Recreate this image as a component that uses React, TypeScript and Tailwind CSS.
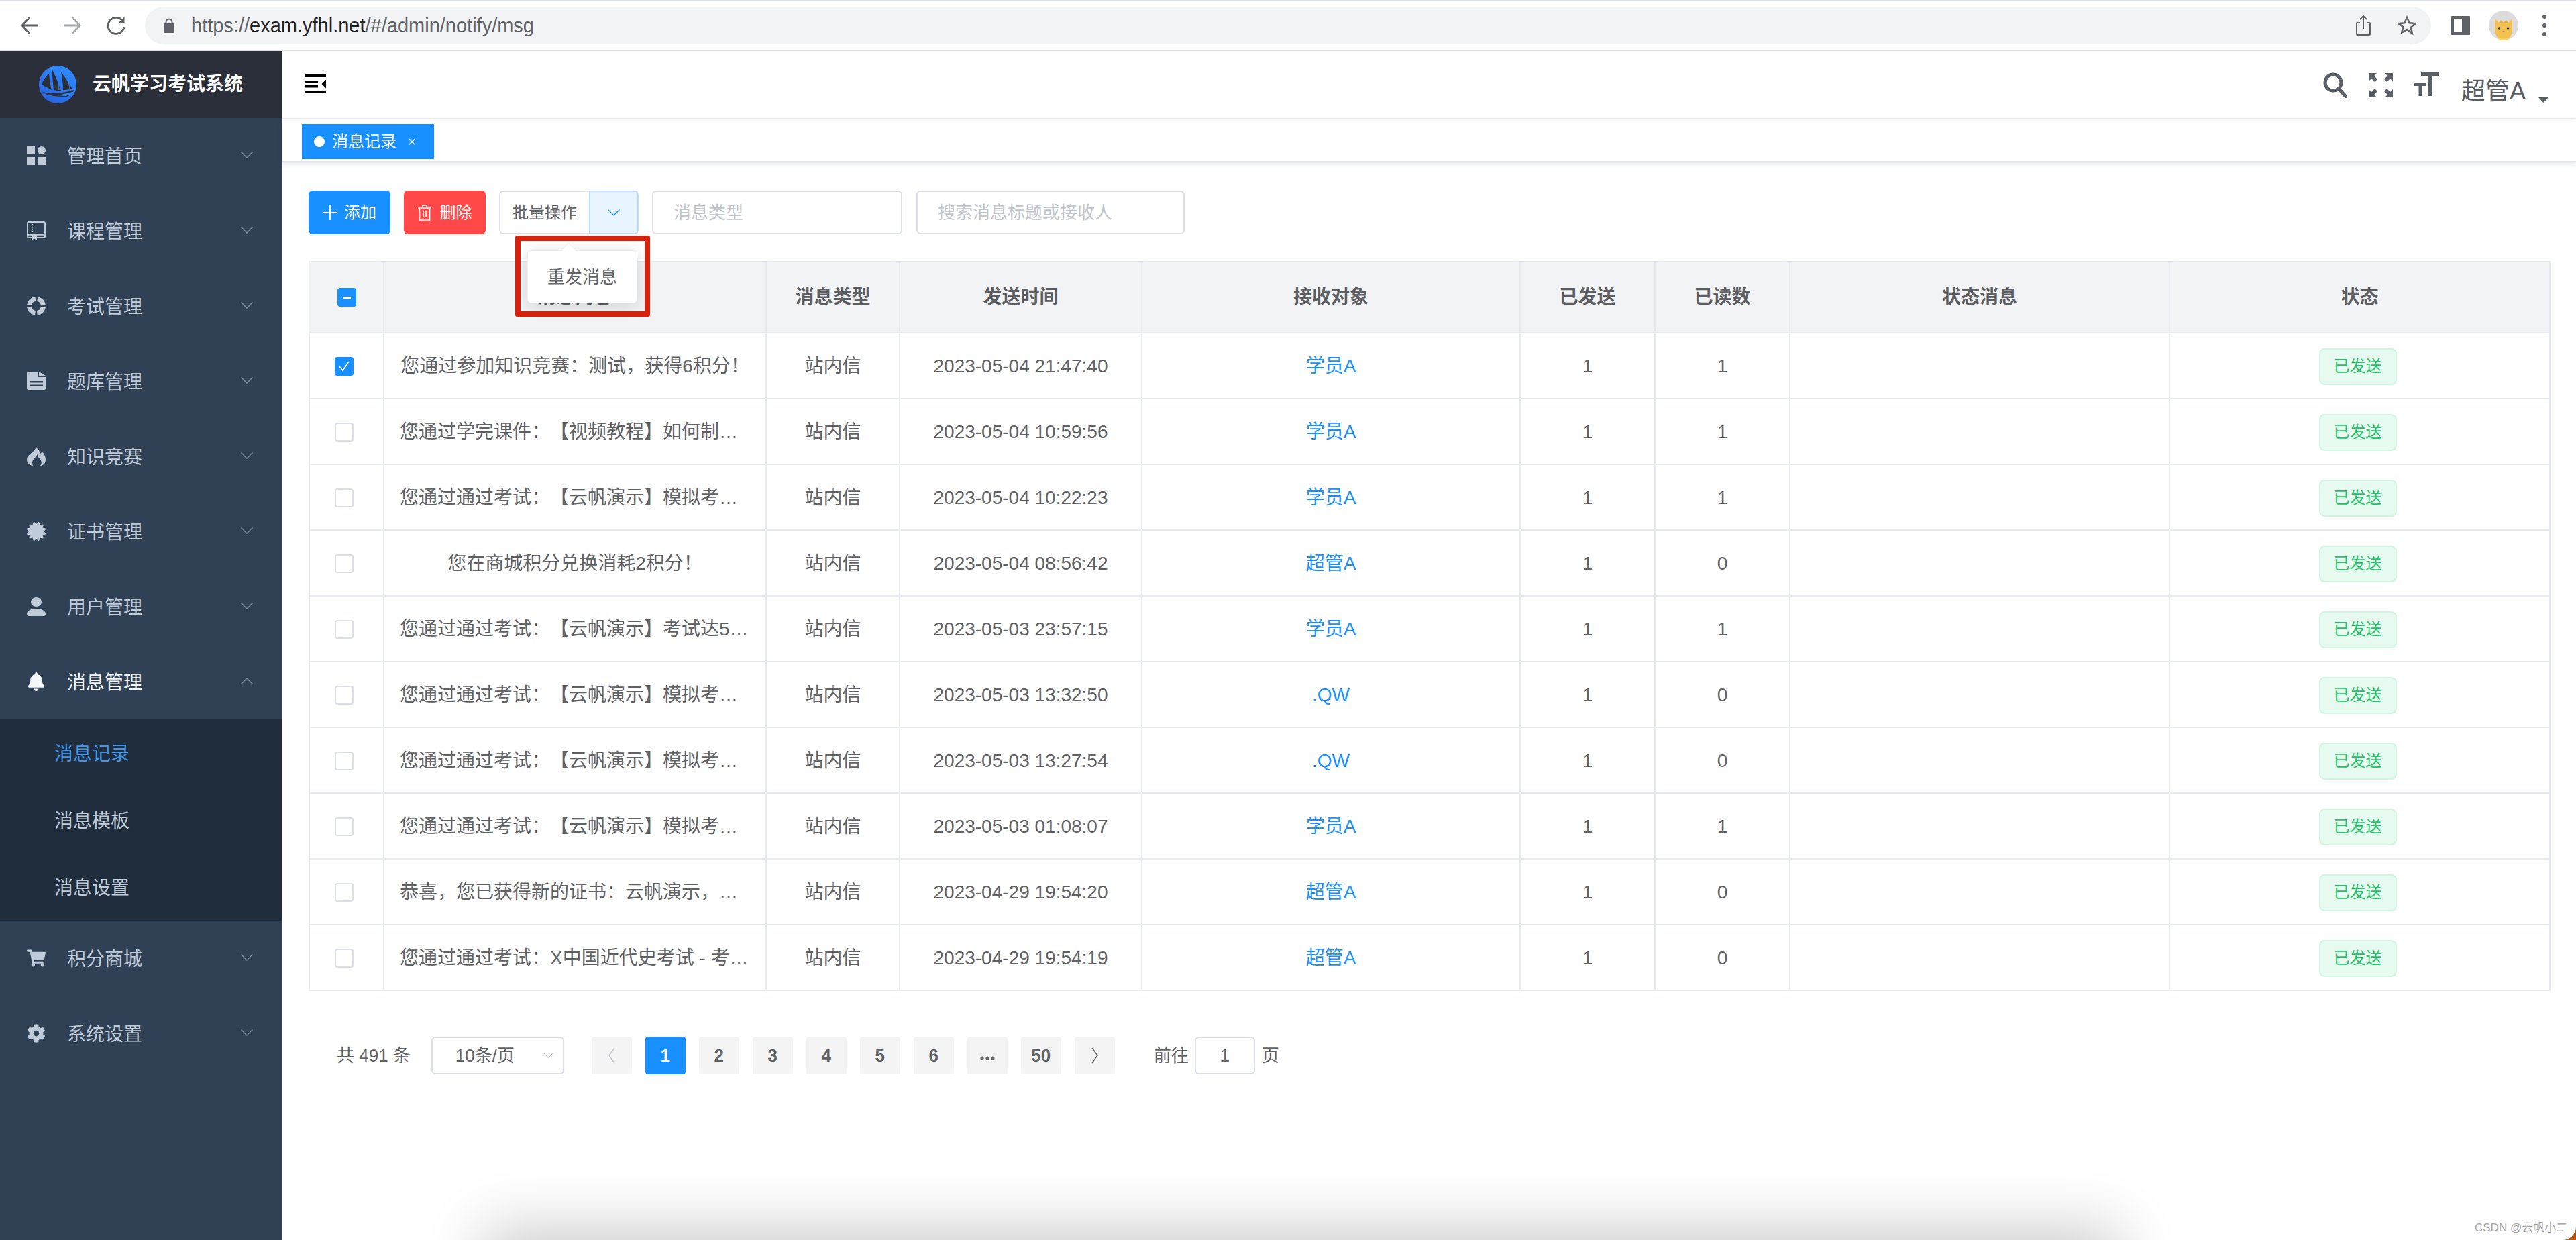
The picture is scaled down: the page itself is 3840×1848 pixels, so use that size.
import React from "react";
import { FaCertificate, FaBell, FaShoppingCart, FaCog } from "react-icons/fa";

const Chevron = ({ up = false, color = "#8a94a3", w = 18 }: { up?: boolean; color?: string; w?: number }) => (
  <svg width={w} height={w / 2 + 1} viewBox="0 0 18 10" fill="none" stroke={color} strokeWidth="1.3">
    <polyline points={up ? "0.5,9.5 9,1 17.5,9.5" : "0.5,0.5 9,9 17.5,0.5"} />
  </svg>
);

const C = "#bfcbd9";
const icons: Record<string, React.ReactNode> = {
  dash: (
    <svg width="28" height="28" viewBox="0 0 28 28" fill={C}>
      <rect x="0" y="0" width="12" height="12" />
      <circle cx="22" cy="6" r="6" />
      <rect x="0" y="16" width="12" height="12" />
      <rect x="16" y="16" width="12" height="12" />
    </svg>
  ),
  book: (
    <svg width="28" height="28" viewBox="0 0 28 28" fill="none" stroke={C} strokeWidth="2">
      <path d="M3 1H25a2 2 0 0 1 2 2V22a2 2 0 0 1-2 2H3a2 2 0 0 1-2-2V3a2 2 0 0 1 2-2z" />
      <path d="M2 19.500H27" strokeWidth="2.500" />
      <path d="M8 4v12" strokeWidth="2.200" strokeDasharray="2 1.400" />
      <path d="M7 20h8v8l-4-2.500L7 28z" fill={C} stroke="none" />
    </svg>
  ),
  target: (
    <svg width="28" height="28" viewBox="0 0 28 28" fill="none">
      <circle cx="14" cy="14" r="10.5" stroke={C} strokeWidth="7" strokeDasharray="13.5 3" strokeDashoffset="-1.5" />
    </svg>
  ),
  doc: (
    <svg width="28" height="28" viewBox="0 0 28 28" fill={C}>
      <path fillRule="evenodd" d="M2 0H16V8H28V25a2 2 0 0 1-2 2H2a2 2 0 0 1-2-2V2a2 2 0 0 1 2-2zM4 14V16.500H24V14zM4 19.500V22H24V19.500z" />
      <path d="M18 0L28 6H18z" />
    </svg>
  ),
  fire: (
    <svg width="28" height="28" viewBox="0 0 28 28" fill={C}>
      <path d="M14 0C16 4 19.500 6 20.500 10C21.500 9 22 7.500 22 6C26 10 28 15 28 19C28 24 25 27.500 20 28C22.500 25 22.500 21 19 17.500C17.500 16 16 13.500 15.500 11C13.500 16 9 18 8.200 22C7.800 24.500 8 26.500 9 28C4 27.500 0 24 0 19C0 13 6 10 8.500 7.500C10.500 5.500 13 3 14 0Z" />
    </svg>
  ),
  cert: <FaCertificate size={28} color={C} />,
  user: (
    <svg width="28" height="28" viewBox="0 0 28 28" fill={C}>
      <ellipse cx="14" cy="7" rx="8" ry="7" />
      <path d="M0 25C0 20 6 17 14 17s14 3 14 8c0 2-1 3-3 3H3c-2 0-3-1-3-3z" />
    </svg>
  ),
  bell: <FaBell size={28} color="#f4f6f8" />,
  cart: <FaShoppingCart size={28} color={C} />,
  cog: <FaCog size={28} color={C} />,
};

const menu = [
  { k: "dash", t: "管理首页" },
  { k: "book", t: "课程管理" },
  { k: "target", t: "考试管理" },
  { k: "doc", t: "题库管理" },
  { k: "fire", t: "知识竞赛" },
  { k: "cert", t: "证书管理" },
  { k: "user", t: "用户管理" },
  { k: "bell", t: "消息管理", open: true },
  { k: "cart", t: "积分商城" },
  { k: "cog", t: "系统设置" },
];

const cols = [111, 570, 199, 361, 564, 201, 201, 566, 567];
const heads = ["", "消息内容", "消息类型", "发送时间", "接收对象", "已发送", "已读数", "状态消息", "状态"];

const rows = [
  ["您通过参加知识竞赛：测试，获得6积分！", "2023-05-04 21:47:40", "学员A", "1", "1"],
  ["您通过学完课件：【视频教程】如何制…", "2023-05-04 10:59:56", "学员A", "1", "1"],
  ["您通过通过考试：【云帆演示】模拟考…", "2023-05-04 10:22:23", "学员A", "1", "1"],
  ["您在商城积分兑换消耗2积分！", "2023-05-04 08:56:42", "超管A", "1", "0"],
  ["您通过通过考试：【云帆演示】考试达5…", "2023-05-03 23:57:15", "学员A", "1", "1"],
  ["您通过通过考试：【云帆演示】模拟考…", "2023-05-03 13:32:50", ".QW", "1", "0"],
  ["您通过通过考试：【云帆演示】模拟考…", "2023-05-03 13:27:54", ".QW", "1", "0"],
  ["您通过通过考试：【云帆演示】模拟考…", "2023-05-03 01:08:07", "学员A", "1", "1"],
  ["恭喜，您已获得新的证书：云帆演示，…", "2023-04-29 19:54:20", "超管A", "1", "0"],
  ["您通过通过考试：X中国近代史考试 - 考…", "2023-04-29 19:54:19", "超管A", "1", "0"],
];

const Logo = () => (
  <svg width="56" height="56" viewBox="0 0 56 56">
    <defs>
      <linearGradient id="lg" x1="0.8" y1="0" x2="0.2" y2="1">
        <stop offset="0" stopColor="#2f8cff" />
        <stop offset="1" stopColor="#2a63e0" />
      </linearGradient>
    </defs>
    <circle cx="28" cy="28" r="28" fill="url(#lg)" />
    <path d="M19 4C24 14 30 28 33 38L22 36C21 26 20 16 19 4z" fill="#2b2f3a" />
    <path d="M33 9C38 16 45 26 50 35L36 36C36 28 35 18 33 9z" fill="#2b2f3a" />
    <path d="M15 12C16 20 17 30 19 36L4 28C6 22 10 16 15 12z" fill="#2b2f3a" />
    <path d="M3 38C14 42 30 42 53 36C50 41 46 44 42 46C30 46 14 46 3 38z" fill="#2b2f3a" />
    <path d="M27 2l3 34M42 8l4 26" stroke="#2f8cff" strokeWidth="1.5" opacity="0.7" fill="none" />
    <path d="M28 44C38 42 46 40 54 38C50 42 44 44 40 45z" fill="#2f8cff" />
  </svg>
);

const Avatar = () => (
  <svg width="44" height="44" viewBox="0 0 44 44">
    <circle cx="22" cy="22" r="22" fill="#dcdcdc" />
    <path d="M9 12l6 6h14l6-6v16c0 9-6 16-13 16S9 37 9 28z" fill="#f2c14f" />
    <path d="M15 18l3-4 4 4 4-4 3 4z" fill="#e8a93c" />
    <circle cx="15.500" cy="26" r="1.800" fill="#333" />
    <circle cx="28.500" cy="26" r="1.800" fill="#333" />
    <path d="M20.500 30h3l-1.500 2z" fill="#d97777" />
    <path d="M14 40a13 6 0 0 0 16 0l-2 4H16z" fill="#f7d568" />
  </svg>
);

export default function App() {
  return (
    <div className="relative flex flex-col w-[3840px] h-[1848px] overflow-hidden bg-white [font-family:'Liberation_Sans','Noto_Sans_CJK_SC',sans-serif] [text-spacing-trim:space-all] text-[#606266]">
      {/* browser toolbar */}
      <div className="flex items-center h-[76px] shrink-0 border-t-2 border-b-2 border-t-[#dee1e6] border-b-[#dadce0] pl-[31px]">
        <div className="flex items-center gap-[38px]">
          <svg width="26" height="26" viewBox="0 0 26 26" fill="none" stroke="#5f6368" strokeWidth="2.800">
            <path d="M26 13H2M13 1.500L2 13l11 11.500" />
          </svg>
          <svg width="26" height="26" viewBox="0 0 26 26" fill="none" stroke="#a6a9ad" strokeWidth="2.800">
            <path d="M0 13h24M13 1.500L24 13 13 24.500" />
          </svg>
          <svg width="28" height="28" viewBox="0 0 28 28" fill="none" stroke="#5f6368" strokeWidth="2.800">
            <path d="M24 7.500A12 12 0 1 0 26 16" />
            <path d="M26.500 1v9h-9z" fill="#5f6368" stroke="none" />
          </svg>
        </div>
        <div className="ml-[29px] flex items-center w-[3408px] h-[56px] rounded-full bg-[#f1f3f4] pl-[28px] pr-[21px]">
          <svg width="16" height="22" viewBox="0 0 16 22" fill="#5f6368">
            <rect x="0" y="8" width="16" height="14" rx="2" />
            <path d="M3.500 9V6a4.500 4.500 0 0 1 9 0v3" fill="none" stroke="#5f6368" strokeWidth="2" />
          </svg>
          <div className="ml-[25px] text-[29px] leading-none text-[#5f6368]">
            https://<span className="text-[#202124]">exam.yfhl.net</span>/#/admin/notify/msg
          </div>
          <svg className="ml-auto" width="22" height="30" viewBox="0 0 22 30" fill="none" stroke="#5f6368" strokeWidth="2">
            <path d="M6 11H2a1 1 0 0 0-1 1v16a1 1 0 0 0 1 1h18a1 1 0 0 0 1-1V12a1 1 0 0 0-1-1h-4M11 20V2M6 6l5-5 5 5" />
          </svg>
          <svg className="ml-[39px]" width="30" height="30" viewBox="0 0 30 30" fill="none" stroke="#5f6368" strokeWidth="2.500">
            <path d="M15 3l3.600 8.200 8.900.8-6.700 5.900 2 8.700L15 21.100l-7.800 4.500 2-8.700L2.500 12l8.900-.8z" />
          </svg>
        </div>
        <svg className="ml-[30px]" width="28" height="28" viewBox="0 0 28 28">
          <rect width="28" height="28" rx="1" fill="#5f6368" />
          <rect x="4" y="4" width="12" height="20" fill="#fff" />
        </svg>
        <div className="ml-[28px]"><Avatar /></div>
        <div className="ml-[36px] flex flex-col gap-[7px]">
          <div className="w-[6px] h-[6px] rounded-full bg-[#5f6368]" />
          <div className="w-[6px] h-[6px] rounded-full bg-[#5f6368]" />
          <div className="w-[6px] h-[6px] rounded-full bg-[#5f6368]" />
        </div>
      </div>

      <div className="flex flex-1 min-h-0">
        {/* sidebar */}
        <aside className="w-[420px] shrink-0 bg-[#304156] flex flex-col">
          <div className="h-[100px] shrink-0 bg-[#2b2f3a] flex items-center pl-[58px] gap-[24px]">
            <Logo />
            <span className="text-[28px] font-bold text-white leading-none">云帆学习考试系统</span>
          </div>
          {menu.map((m) => (
            <div key={m.k}>
              <div className={`relative flex items-center h-[112px] pl-[40px] ${m.open ? "text-[#f4f6f8]" : "text-[#bfcbd9]"}`}>
                <span className="w-[28px] h-[28px] flex shrink-0">{icons[m.k]}</span>
                <span className="ml-[32px] pt-[4px] text-[28px] leading-none">{m.t}</span>
                <span className="absolute left-[359px] top-[50px] flex"><Chevron up={!!m.open} /></span>
              </div>
              {m.open && (
                <div className="bg-[#1f2d3d] text-[28px] leading-none text-[#bfcbd9]">
                  <div className="h-[100px] flex items-center pl-[81px] pt-[4px] text-[#3f96ea]">消息记录</div>
                  <div className="h-[100px] flex items-center pl-[81px] pt-[4px]">消息模板</div>
                  <div className="h-[100px] flex items-center pl-[81px] pt-[4px]">消息设置</div>
                </div>
              )}
            </div>
          ))}
        </aside>

        {/* main */}
        <main className="flex-1 min-w-0 flex flex-col">
          <header className="relative h-[100px] shrink-0 flex items-start pl-[34px] shadow-[0_2px_6px_rgba(0,21,41,0.05)]">
            <svg className="mt-[35px]" width="32" height="28" viewBox="0 0 32 28" fill="#000">
              <rect width="32" height="4" />
              <rect y="24" width="32" height="4" />
              <rect y="9" width="20" height="3.500" />
              <rect y="16" width="20" height="3.500" />
              <path d="M32 7.500v13L25.500 14z" />
            </svg>
            <div className="ml-auto flex items-start pr-[41px]">
              <svg className="mt-[32px]" width="36" height="38" viewBox="0 0 36 38" fill="none" stroke="#5a5e66" strokeWidth="5">
                <circle cx="15" cy="15" r="12" />
                <path d="M24 25l10 11" strokeLinecap="round" />
              </svg>
              <svg className="mt-[33px] ml-[32px]" width="36" height="36" viewBox="0 0 36 36" fill="#5a5e66">
                <path d="M0 0h12L8 4l5 5-4 4-5-5-4 4zM36 0H24l4 4-5 5 4 4 5-5 4 4zM0 36H12L8 32l5-5-4-4-5 5-4-4zM36 36H24l4-4-5-5 4-4 5 5 4-4z" />
              </svg>
              <svg className="mt-[31px] ml-[32px]" width="37" height="36" viewBox="0 0 37 36" fill="#5a5e66">
                <path d="M10 0h27v6H26.500v30h-6V6H10z" />
                <path d="M0 16h18v5h-6.500v15H6.500V21H0z" />
              </svg>
              <span className="mt-[38px] ml-[33px] text-[36px] leading-[44px] text-[#5a5e66]">超管A</span>
              <svg className="mt-[69px] ml-[19px]" width="15" height="8" viewBox="0 0 15 8" fill="#5a5e66">
                <path d="M0 0h15L7.500 8z" />
              </svg>
            </div>
          </header>

          <div className="h-[66px] shrink-0 pt-[8px] pl-[30px] border-t border-[#f0f2f5] border-b-2 border-b-[#dfe3e8] shadow-[0_3px_6px_rgba(0,21,41,0.1)]">
            <div className="inline-flex items-center w-[197px] h-[52px] bg-[#1890ff] text-white text-[24px] leading-none pl-[18px]">
              <span className="w-[16px] h-[16px] rounded-full bg-white" />
              <span className="ml-[11px]">消息记录</span>
              <span className="ml-[17px] text-[20px] opacity-90">×</span>
            </div>
          </div>

          <div className="flex-1 min-h-0 pl-[40px] pt-[42px]">
            {/* toolbar */}
            <div className="flex items-center h-[65px]">
              <button className="flex items-center justify-center w-[122px] h-[65px] rounded-[6px] bg-[#1890ff] text-white text-[24px] leading-none">
                <svg width="22" height="22" viewBox="0 0 22 22" stroke="#fff" strokeWidth="2">
                  <path d="M11 0v22M0 11h22" />
                </svg>
                <span className="ml-[10px]">添加</span>
              </button>
              <button className="ml-[20px] flex items-center justify-center w-[122px] h-[65px] rounded-[6px] bg-[#ff4949] text-white text-[24px] leading-none">
                <svg width="20" height="24" viewBox="0 0 20 24" fill="none" stroke="#fff" strokeWidth="1.600">
                  <path d="M0 5h20M7 5V1h6v4M2.500 5v18h15V5M8 10v9M12 10v9" />
                </svg>
                <span className="ml-[13px]">删除</span>
              </button>
              <div className="relative ml-[20px] flex w-[208px] h-[65px]">
                <div className="w-[134px] h-full flex items-center justify-center rounded-l-[6px] border-2 border-r-0 border-[#dcdfe6] text-[24px] leading-none">批量操作</div>
                <div className="flex-1 h-full flex items-center justify-center rounded-r-[6px] bg-[#e8f4ff] border-2 border-[#badeff]">
                  <Chevron color="#1890ff" />
                </div>
                <div className="absolute left-[24px] top-[67px] w-[201px] h-[121px] border-[8px] border-[#d8210d] rounded-[3px] z-20" />
                <div className="absolute left-[42px] top-[89px] w-[164px] h-[79px] bg-white rounded-[6px] border border-[#ebeef5] shadow-[0_4px_24px_rgba(0,0,0,0.14)] flex items-center justify-center text-[26px] leading-none z-10 text-[#606266]">
                  <span className="absolute left-[52px] -top-[10px] w-[20px] h-[20px] rotate-45 bg-white border-l border-t border-[#ebeef5] -z-10 scale-y-75" />
                  重发消息
                </div>
              </div>
              <div className="ml-[20px] w-[373px] h-[65px] flex items-center rounded-[6px] border-2 border-[#dcdfe6] pl-[30px] text-[26px] leading-none text-[#c0c4cc]">消息类型</div>
              <div className="ml-[21px] w-[400px] h-[65px] flex items-center rounded-[6px] border-2 border-[#dcdfe6] pl-[30px] text-[26px] leading-none text-[#c0c4cc]">搜索消息标题或接收人</div>
            </div>

            {/* table */}
            <table className="mt-[40px] w-[3340px] table-fixed border-collapse text-[28px] leading-none [&_td]:pt-[2px]">
              <colgroup>
                {cols.map((w, i) => (
                  <col key={i} style={{ width: w }} />
                ))}
              </colgroup>
              <thead>
                <tr className="h-[106px] bg-[#f2f3f5]">
                  {heads.map((h, i) => (
                    <th key={i} className="border-2 border-[#e6e9ee] font-bold text-center align-middle text-[#5c5e62]">
                      {i === 0 ? (
                        <div className="flex justify-center">
                          <div className="w-[28px] h-[28px] rounded-[4px] bg-[#1890ff] flex items-center justify-center">
                            <div className="w-[12px] h-[3px] bg-white" />
                          </div>
                        </div>
                      ) : (
                        h
                      )}
                    </th>
                  ))}
                </tr>
              </thead>
              <tbody>
                {rows.map((r, i) => (
                  <tr key={i} className="h-[98px]">
                    <td className="border-2 border-[#e6e9ee] align-middle">
                      <div className="flex justify-center pr-[8px]">
                        {i === 0 ? (
                          <div className="w-[28px] h-[28px] rounded-[4px] bg-[#1890ff] flex items-center justify-center">
                            <svg width="18" height="16" viewBox="0 0 18 16" fill="none" stroke="#fff" strokeWidth="1.800">
                              <path d="M2 8l5 6L16 1" />
                            </svg>
                          </div>
                        ) : (
                          <div className="w-[28px] h-[28px] rounded-[4px] bg-white border-2 border-[#dcdfe6]" />
                        )}
                      </div>
                    </td>
                    <td className={`border-2 border-[#e6e9ee] px-[23px] align-middle whitespace-nowrap ${r[0].endsWith("…") ? "text-left" : "text-center"}`}>
                      {r[0]}
                    </td>
                    <td className="border-2 border-[#e6e9ee] text-center align-middle">站内信</td>
                    <td className="border-2 border-[#e6e9ee] text-center align-middle">{r[1]}</td>
                    <td className="border-2 border-[#e6e9ee] text-center align-middle text-[#1890ff]">{r[2]}</td>
                    <td className="border-2 border-[#e6e9ee] text-center align-middle">{r[3]}</td>
                    <td className="border-2 border-[#e6e9ee] text-center align-middle">{r[4]}</td>
                    <td className="border-2 border-[#e6e9ee]" />
                    <td className="border-2 border-[#e6e9ee] align-middle">
                      <div className="flex justify-center pr-[6px]">
                        <span className="flex items-center justify-center w-[116px] h-[55px] rounded-[8px] bg-[#e7faf0] border-2 border-[#d0f5e0] text-[#27c26c] text-[24px] leading-none">已发送</span>
                      </div>
                    </td>
                  </tr>
                ))}
              </tbody>
            </table>

            {/* pagination */}
            <div className="mt-[68px] pl-[42px] flex items-center h-[56px] text-[26px] leading-none">
              <span>共 491 条</span>
              <div className="relative ml-[31px] w-[198px] h-[56px] flex items-center rounded-[6px] border-2 border-[#dcdfe6] pl-[34px]">
                10条/页
                <span className="absolute left-[165px] top-[22px] flex"><Chevron color="#c0c4cc" w={15} /></span>
              </div>
              <div className="ml-[41px] flex gap-[20px] font-bold">
                <div className="w-[60px] h-[56px] rounded-[4px] bg-[#f4f4f5] flex items-center justify-center">
                  <svg width="12" height="24" viewBox="0 0 12 24" fill="none" stroke="#c0c4cc" strokeWidth="1.500"><path d="M10 1L2 12l8 11" /></svg>
                </div>
                {["1", "2", "3", "4", "5", "6", "…", "50"].map((p) => (
                  <div key={p} className={`w-[60px] h-[56px] rounded-[4px] flex items-center justify-center ${p === "1" ? "bg-[#1890ff] text-white" : "bg-[#f4f4f5] text-[#606266]"}`}>
                    {p === "…" ? (
                      <svg width="22" height="6" viewBox="0 0 22 6" fill="#606266" className="mt-[8px]">
                        <circle cx="3" cy="3" r="2.600" />
                        <circle cx="11" cy="3" r="2.600" />
                        <circle cx="19" cy="3" r="2.600" />
                      </svg>
                    ) : (
                      p
                    )}
                  </div>
                ))}
                <div className="w-[60px] h-[56px] rounded-[4px] bg-[#f4f4f5] flex items-center justify-center">
                  <svg width="12" height="24" viewBox="0 0 12 24" fill="none" stroke="#606266" strokeWidth="1.500"><path d="M2 1l8 11-8 11" /></svg>
                </div>
              </div>
              <span className="ml-[58px]">前往</span>
              <div className="ml-[9px] w-[90px] h-[56px] flex items-center justify-center rounded-[6px] border-2 border-[#dcdfe6]">1</div>
              <span className="ml-[10px]">页</span>
            </div>
          </div>
        </main>
      </div>

      {/* window shadow along the bottom edge */}
      <div className="absolute left-[770px] top-[1880px] w-[2340px] h-[100px] bg-black/30 shadow-[0_0_90px_50px_rgba(0,0,0,0.2)]" />
      {/* watermark */}
      <span className="absolute left-[3689px] top-[1821px] text-[17px] leading-none text-[#a5a5a5]">CSDN @云帆小二</span>
      <div className="absolute right-0 bottom-0 w-[20px] h-[20px] bg-[#b5520f]">
        <div className="w-full h-full bg-white rounded-br-[20px]" />
      </div>
    </div>
  );
}
